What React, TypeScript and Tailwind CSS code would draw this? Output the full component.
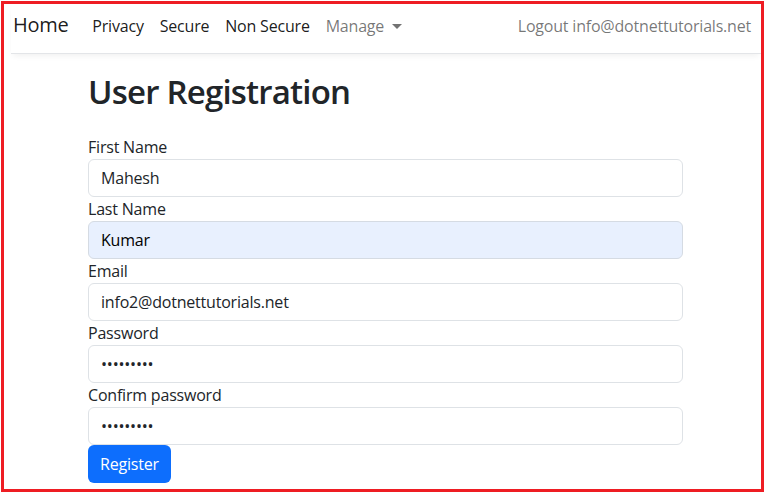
export default function App() {
  const font = { fontFamily: '"Open Sans", "Noto Sans", sans-serif', letterSpacing: "-0.2px" };
  const fields = [
    { label: "First Name", value: "Mahesh", type: "text", filled: false },
    { label: "Last Name", value: "Kumar", type: "text", filled: true },
    { label: "Email", value: "info2@dotnettutorials.net", type: "text", filled: false },
    { label: "Password", value: "123456789", type: "password", filled: false },
    { label: "Confirm password", value: "123456789", type: "password", filled: false },
  ];

  return (
    <div className="w-[768px] h-[496px] bg-white pt-[1px] pl-[1px] font-['Open_Sans',sans-serif] tracking-[-0.2px]">
      <div className="w-[763px] h-[491px] border-[3px] border-[#ee1d23] box-border overflow-hidden">
        {/* Navbar */}
        <nav className="ml-[7px] h-[50px] pt-[6px] pl-[2px] pr-[10px] flex items-baseline border-b border-[#e3e5e8] shadow-[0_4px_6px_-2px_rgba(0,0,0,0.06)] text-[rgba(0,0,0,0.9)]">
          <span className="text-[20px] leading-[30px] mr-[24px] tracking-[-0.3px]">Home</span>
          <div className="flex items-baseline gap-[16px] text-[16px] leading-[24px]">
            <span>Privacy</span>
            <span>Secure</span>
            <span>Non Secure</span>
            <span className="text-[rgba(0,0,0,0.55)] flex items-center">
              Manage
              <span className="ml-[8px] inline-block w-0 h-0 border-x-[5px] border-x-transparent border-t-[5px] border-t-[rgba(0,0,0,0.55)]"></span>
            </span>
          </div>
          <span className="ml-auto text-[16px] leading-[24px] text-[rgba(0,0,0,0.55)]">
            Logout info@dotnettutorials.net
          </span>
        </nav>

        {/* Form */}
        <main className="ml-[84px] w-[595px] mt-[18px] text-[#212529]">
          <h1 className="text-[33px] leading-[40px] font-semibold tracking-[-0.8px] mb-[23px]">User Registration</h1>
          {fields.map((f) => (
            <div key={f.label}>
              <label className="block text-[16px] leading-[24px]">{f.label}</label>
              <input
                type={f.type}
                value={f.value}
                readOnly
                style={font}
                className={
                  f.filled
                    ? "block w-full h-[38px] px-[12px] text-[16px] text-black rounded-[6px] border border-[#d5dbe3] bg-[#e8f0fe] outline-none"
                    : "block w-full h-[38px] px-[12px] text-[16px] text-[#212529] rounded-[6px] border border-[#dee2e6] bg-white outline-none"
                }
              />
            </div>
          ))}
          <button className="h-[38px] px-[12px] text-[16px] text-white bg-[#0d6efd] rounded-[6px]">
            Register
          </button>
        </main>
      </div>
    </div>
  );
}
